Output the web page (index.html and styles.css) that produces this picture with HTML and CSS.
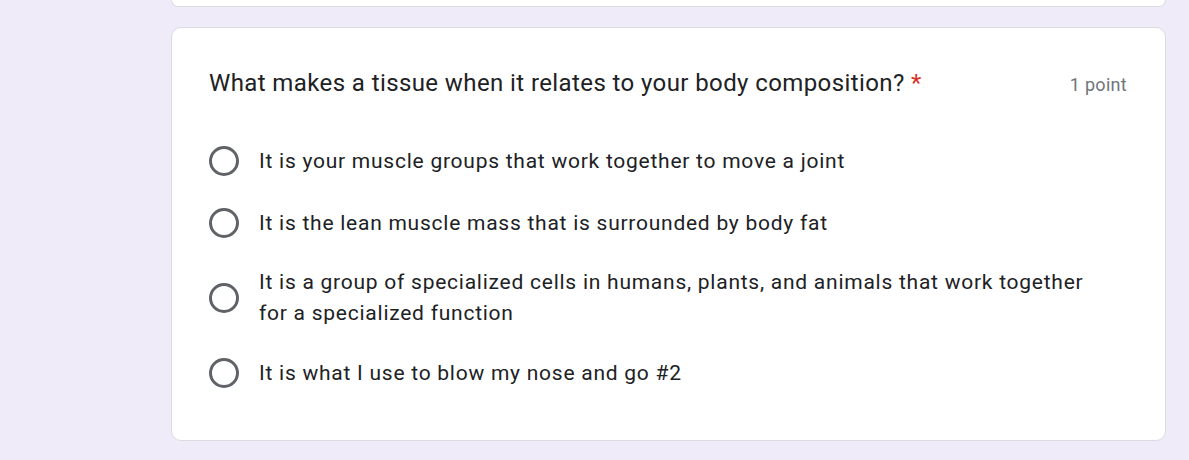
FILE: index.html
```html
<!DOCTYPE html>
<html lang="en">
<head>
    <meta charset="UTF-8">
    <meta name="viewport" content="width=device-width, initial-scale=1.0">
    <title>Quiz question</title>
    <link rel="stylesheet" href="styles.css">
</head>
<body>
    <div class="form">
        <div class="card card-prev"></div>

        <div class="card question">
            <div class="question-head">
                <div class="question-title">What makes a tissue when it relates to your body composition? <span class="required">*</span></div>
                <div class="points">1 point</div>
            </div>

            <div class="options">
                <label class="option">
                    <span class="radio"></span>
                    <span class="option-text">It is your muscle groups that work together to move a joint</span>
                </label>
                <label class="option">
                    <span class="radio"></span>
                    <span class="option-text">It is the lean muscle mass that is surrounded by body fat</span>
                </label>
                <label class="option">
                    <span class="radio"></span>
                    <span class="option-text">It is a group of specialized cells in humans, plants, and animals that work together for a specialized function</span>
                </label>
                <label class="option">
                    <span class="radio"></span>
                    <span class="option-text">It is what I use to blow my nose and go #2</span>
                </label>
            </div>
        </div>
    </div>
</body>
</html>
```

FILE: styles.css
```css
:root {
    --texto: #202124;
    --cinza: #70757a;
    --borda: #dadce0;
}

body {
    font-family: Roboto, 'Noto Sans', sans-serif;
    margin: 0;
    background: #f0ebf8;
    color: var(--texto);
}

.form {
    width: 995px;
    margin-left: 171px;
}

.card {
    background: white;
    border: 1px solid var(--borda);
    border-radius: 10px;
}

.card-prev {
    height: 6px;
    border-top: none;
    border-radius: 0 0 10px 10px;
    margin-bottom: 20px;
}

.question {
    padding: 39px 38px 36px 37px;
}

.question-head {
    display: flex;
    justify-content: space-between;
    align-items: baseline;
}

.question-title {
    font-size: 24px;
    line-height: 32px;
    letter-spacing: 0.4px;
}

.required {
    color: #d93025;
}

.points {
    font-size: 18px;
    letter-spacing: 0.3px;
    color: var(--cinza);
}

.options {
    margin-top: 31px;
}

.option {
    display: flex;
    align-items: center;
    gap: 20px;
    min-height: 62px;
    padding: 13px 0;
    box-sizing: border-box;
    cursor: pointer;
}

.radio {
    flex: none;
    width: 24px;
    height: 24px;
    border: 3px solid #5f6368;
    border-radius: 50%;
}

.option-text {
    font-size: 21px;
    line-height: 31px;
    letter-spacing: 0.75px;
    max-width: 845px;
}
```
